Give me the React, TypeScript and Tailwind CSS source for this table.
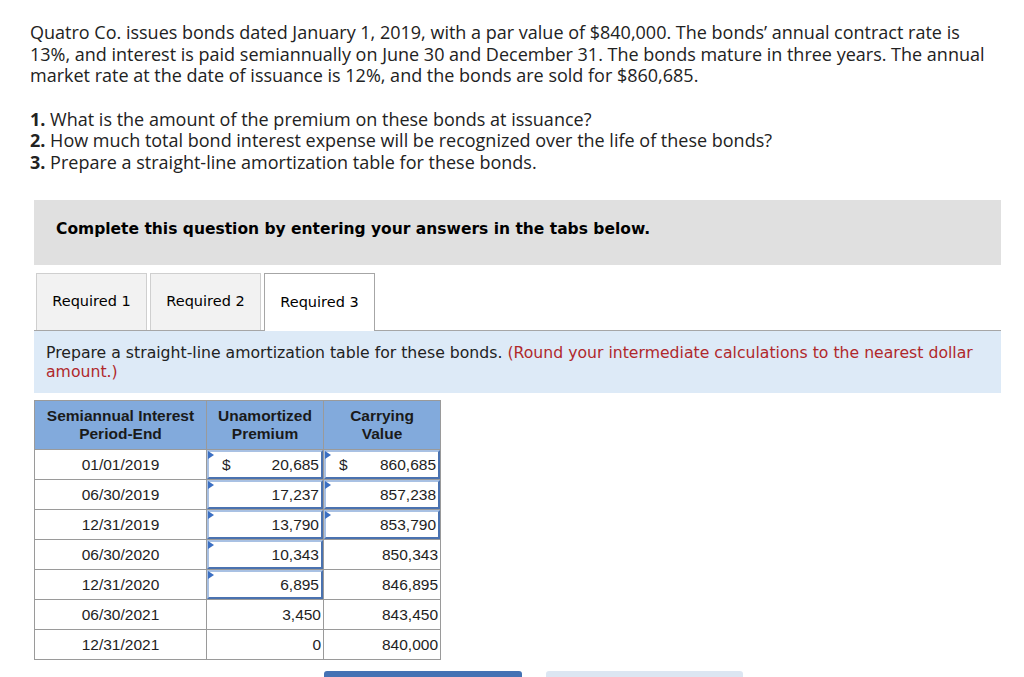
import React from 'react';

const rows = [
  { date: '01/01/2019', prem: '20,685', carry: '860,685', premInput: true, carryInput: true, dollar: true },
  { date: '06/30/2019', prem: '17,237', carry: '857,238', premInput: true, carryInput: true },
  { date: '12/31/2019', prem: '13,790', carry: '853,790', premInput: true, carryInput: true },
  { date: '06/30/2020', prem: '10,343', carry: '850,343', premInput: true },
  { date: '12/31/2020', prem: '6,895', carry: '846,895', premInput: true },
  { date: '06/30/2021', prem: '3,450', carry: '843,450' },
  { date: '12/31/2021', prem: '0', carry: '840,000' },
];

const Cell: React.FC<{ value: string; input?: boolean; dollar?: boolean }> = ({ value, input, dollar }) => (
  <td className="border border-[#9a9a9a] p-0 h-[30px]">
    <div
      className={
        'relative flex items-center h-full px-[2px] ' +
        (input ? 'border-2 border-[#4a72b0] border-l-[#a9c1e3] border-t-[#a9c1e3]' : '')
      }
    >
      {input && (
        <span className="absolute left-[-1px] top-[-1px] w-0 h-0 border-t-[4px] border-b-[4px] border-l-[6px] border-t-transparent border-b-transparent border-l-[#3b6fc2]" />
      )}
      {dollar && <span className="pl-[11px]">$</span>}
      <span className="ml-auto">{value}</span>
    </div>
  </td>
);

const App: React.FC = () => {
  return (
    <div className="w-[1024px] h-[677px] overflow-hidden bg-white relative">
      <div className="pl-[30px] pr-[20px] pt-[22px] text-[18px] leading-[21.5px] text-[#222] font-['Open_Sans',Arial,sans-serif] whitespace-nowrap">
        <p>
          Quatro Co. issues bonds dated January 1, 2019, with a par value of $840,000. The bonds’ annual contract rate is
          <br />
          13%, and interest is paid semiannually on June 30 and December 31. The bonds mature in three years. The annual
          <br />
          market rate at the date of issuance is 12%, and the bonds are sold for $860,685.
        </p>
        <div className="mt-[22px]">
          <p><b>1.</b> What is the amount of the premium on these bonds at issuance?</p>
          <p><b>2.</b> How much total bond interest expense will be recognized over the life of these bonds?</p>
          <p><b>3.</b> Prepare a straight-line amortization table for these bonds.</p>
        </div>
      </div>

      <div className="ml-[34px] w-[967px] font-['DejaVu_Sans',Verdana,sans-serif]">
        <div className="mt-[27px] h-[65px] bg-[#e0e0e0] pl-[22px] pt-[18px] text-[15.5px] font-bold text-black">
          Complete this question by entering your answers in the tabs below.
        </div>

        <div className="mt-[8px] flex items-end gap-[3px] pl-[2px] border-b border-[#a6a6a6] text-[14.5px] text-black">
          <div className="w-[111px] h-[57px] flex items-center justify-center bg-[#f2f2f2] border border-b-0 border-[#cfcfcf]">Required 1</div>
          <div className="w-[111px] h-[57px] flex items-center justify-center bg-[#f2f2f2] border border-b-0 border-[#cfcfcf]">Required 2</div>
          <div className="w-[111px] h-[58px] -mb-px flex items-center justify-center bg-white border border-b-0 border-[#a6a6a6]">Required 3</div>
        </div>

        <div className="h-[62px] bg-[#ddeaf7] pl-[12px] pr-[20px] pt-[12px] text-[15.7px] leading-[19px] text-[#222]">
          Prepare a straight-line amortization table for these bonds.{' '}
          <span className="text-[#b0282b]">(Round your intermediate calculations to the nearest dollar amount.)</span>
        </div>

        <table className="mt-[7px] border-collapse text-[15.5px] text-[#1e1e1e] font-['Liberation_Sans',Arial,sans-serif]">
          <thead>
            <tr className="bg-[#82aadc] h-[49px] text-[#1a1a1a] leading-[18px]">
              <th className="w-[172px] border border-[#9a9a9a] font-bold">Semiannual Interest<br />Period-End</th>
              <th className="w-[117px] border border-[#9a9a9a] font-bold">Unamortized<br />Premium</th>
              <th className="w-[117px] border border-[#9a9a9a] font-bold">Carrying<br />Value</th>
            </tr>
          </thead>
          <tbody>
            {rows.map((r) => (
              <tr key={r.date}>
                <td className="border border-[#9a9a9a] text-center h-[30px]">{r.date}</td>
                <Cell value={r.prem} input={r.premInput} dollar={r.dollar} />
                <Cell value={r.carry} input={r.carryInput} dollar={r.dollar} />
              </tr>
            ))}
          </tbody>
        </table>
      </div>

      <div className="absolute left-[324px] top-[671px] w-[198px] h-[10px] rounded-t-[3px] bg-[#4472b4]" />
      <div className="absolute left-[546px] top-[671px] w-[197px] h-[10px] rounded-t-[3px] bg-[#dce6f2]" />
    </div>
  );
};

export default App;
